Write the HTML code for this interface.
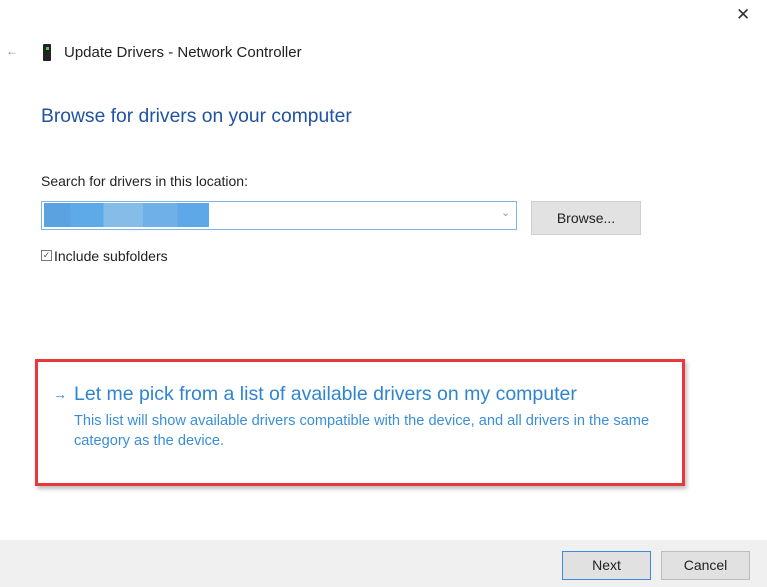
<!DOCTYPE html>
<html><head><meta charset="utf-8"><style>
body{margin:0;width:767px;height:587px;background:#fff;position:relative;overflow:hidden;font-family:"Segoe UI","Liberation Sans",sans-serif;color:#222}
.a{position:absolute;white-space:nowrap}
</style></head><body>
<div class="a" style="left:736px;top:5px;font-size:17px;color:#333">✕</div>
<div class="a" style="left:6px;top:44px;font-size:12px;color:#888">←</div>
<div class="a" style="left:43px;top:44px;width:8px;height:17px;background:#222;border-radius:1px"><div style="position:absolute;left:3px;top:3px;width:3px;height:3px;background:#4c4"></div></div>
<div class="a" style="left:64px;top:44px;font-size:15px;color:#222">Update Drivers - Network Controller</div>
<div class="a" style="left:41px;top:106px;font-size:19.3px;color:#1f52a4">Browse for drivers on your computer</div>
<div class="a" style="left:41px;top:173px;font-size:14px">Search for drivers in this location:</div>
<div class="a" style="left:41px;top:201px;width:474px;height:27px;border:1px solid #7eb4ea;background:#fff"></div>
<div class="a" style="left:44px;top:203px;width:165px;height:24px;background:linear-gradient(90deg,#5aa2e0 0 16%,#5eaae8 16% 36%,#86bce8 36% 60%,#70b0e8 60% 81%,#5ea8e8 81%)"></div>
<div class="a" style="left:501px;top:206px;font-size:11px;color:#999">⌄</div>
<div class="a" style="left:531px;top:201px;width:108px;height:32px;border:1px solid #cfcfcf;background:#e2e2e2;font-size:14px;text-align:center;line-height:32px">Browse...</div>
<div class="a" style="left:41px;top:250px;width:9px;height:9px;border:1px solid #777;font-size:9px;line-height:9px;text-align:center;color:#555">✓</div>
<div class="a" style="left:54px;top:248px;font-size:14px">Include subfolders</div>
<div class="a" style="left:35px;top:359px;width:644px;height:121px;border:3px solid #e8383c;box-shadow:2px 3px 4px rgba(0,0,0,.25)"></div>
<div class="a" style="left:53px;top:386px;font-size:14px;color:#2f84d0">→</div>
<div class="a" style="left:74px;top:383px;font-size:19.5px;color:#2f84d0">Let me pick from a list of available drivers on my computer</div>
<div class="a" style="left:74px;top:411px;font-size:14.6px;line-height:20px;color:#3a8ed8">This list will show available drivers compatible with the device, and all drivers in the same<br>category as the device.</div>
<div class="a" style="left:0;top:540px;width:767px;height:47px;background:#f0f0f0"></div>
<div class="a" style="left:562px;top:551px;width:87px;height:27px;border:1px solid #3c8be0;background:#e1e1e1;font-size:14px;text-align:center;line-height:27px">Next</div>
<div class="a" style="left:661px;top:551px;width:87px;height:27px;border:1px solid #bdbdbd;background:#e1e1e1;font-size:14px;text-align:center;line-height:27px">Cancel</div>
</body></html>
